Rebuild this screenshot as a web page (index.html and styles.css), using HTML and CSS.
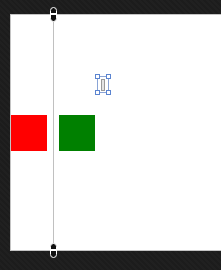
FILE: index.html
```html
<!DOCTYPE html>
<html lang="en">
<head>
    <meta charset="UTF-8">
    <title>Canvas</title>
    <link rel="stylesheet" href="styles.css">
</head>
<body>

<div class="stage">
    <div class="canvas">
        <div class="shapes">
            <div class="shape red"></div>
            <div class="shape green"></div>
        </div>

        <!-- selected tiny text element -->
        <svg class="selection" width="20" height="24" viewBox="0 0 20 24">
            <rect x="4.5" y="3.5" width="11" height="16" fill="none" stroke="#8aa4d6" stroke-width="1"/>
            <rect x="8.5" y="6.5" width="3" height="11" fill="#e4e4e4" stroke="#9a9a9a" stroke-width="1"/>
            <rect x="2.5" y="1.5" width="4" height="4" fill="#fff" stroke="#5b84d0"/>
            <rect x="13.5" y="1.5" width="4" height="4" fill="#fff" stroke="#5b84d0"/>
            <rect x="2.5" y="17.5" width="4" height="4" fill="#fff" stroke="#5b84d0"/>
            <rect x="13.5" y="17.5" width="4" height="4" fill="#fff" stroke="#5b84d0"/>
        </svg>
    </div>

    <!-- vertical guide with its two handles -->
    <div class="guide"></div>
    <div class="handle top"></div>
    <div class="handle bottom"></div>
</div>

</body>
</html>
```

FILE: styles.css
```css
body {
    margin: 0;
    background-color: #1e1e1e;
    background-image: repeating-linear-gradient(45deg, #202020 0 2px, #1c1c1c 2px 4px);
    overflow: hidden;
}
.stage {
    position: relative;
    width: 221px;
    height: 270px;
    padding-top: 14px;
    padding-left: 10px;
    box-sizing: border-box;
    overflow: hidden;
}
.canvas {
    position: relative;
    width: 211px;
    height: 237px;
    background: white;
    border: 1px solid #c4c4c4;
    border-right: none;
    box-sizing: border-box;
}
.shapes {
    display: flex;
    gap: 12px;
    padding-top: 100px;
}
.shape {
    width: 36px;
    height: 36px;
}
.red {
    background-color: #ff0000;
}
.green {
    background-color: #008000;
}
.selection {
    position: absolute;
    left: 82px;
    top: 58px;
}
.guide {
    position: absolute;
    left: 53px;
    top: 18px;
    width: 1px;
    height: 238px;
    background-color: #c0c0c0;
}
.handle {
    position: absolute;
    left: 50px;
    width: 7px;
    height: 15px;
    box-sizing: border-box;
    border: 1.5px solid white;
    border-radius: 4px;
    background: #111;
}
.handle::after {
    content: "";
    position: absolute;
    left: 0;
    right: 0;
    top: 5px;
    height: 1.5px;
    background: white;
}
.handle.top {
    top: 7px;
}
.handle.bottom {
    top: 243px;
}
```
